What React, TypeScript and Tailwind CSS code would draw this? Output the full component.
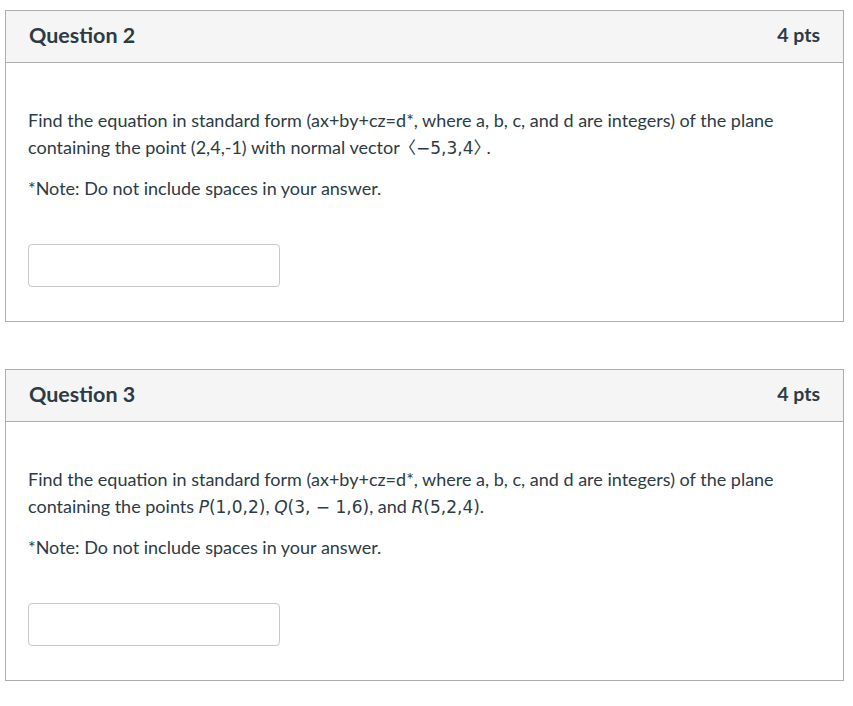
import React from 'react';

const M = ({ children, i }: { children: React.ReactNode; i?: boolean }) => (
  <span className={`font-['DejaVu_Sans','Noto_Sans_CJK_SC',sans-serif] text-[17px] ${i ? 'italic' : ''}`}>{children}</span>
);

function Question({ n, line2 }: { n: number; line2: React.ReactNode }) {
  return (
    <div className="border border-[#adadad] bg-white">
      <div className="flex h-[52px] items-center justify-between border-b border-[#adadad] bg-[#f5f5f5] pb-[3px] pl-[23px] pr-[23px]">
        <h2 className="text-[21.5px] font-bold text-[#2d3b45]">Question {n}</h2>
        <span className="text-[19.5px] font-bold text-[#2d3b45]">4 pts</span>
      </div>
      <div className="px-[22px] pt-[44px] pb-[34px] text-[18px] text-[#2d3b45]">
        <p className="leading-[27px]">
          Find the equation in standard form (ax+by+cz=d*, where a, b, c, and d are integers) of the plane
          <br />
          {line2}
        </p>
        <p className="mt-[13px] leading-[27px]">*Note: Do not include spaces in your answer.</p>
        <div className="mt-[42px] h-[43px] w-[252px] rounded-[4px] border border-[#c8c8c8] bg-white" />
      </div>
    </div>
  );
}

export default function App() {
  return (
    <div className="min-h-[706px] bg-white pl-[5px] pt-[10px] font-['Lato',sans-serif]">
      <div className="flex w-[839px] flex-col gap-[47px]">
        <Question
          n={2}
          line2={
            <>
              containing the point (2,4,-1) with normal vector{' '}
              <M>
                <span className="-ml-[5px]">〈</span>−5,3,4<span className="-mr-[4px]">〉</span>
              </M>
              .
            </>
          }
        />
        <Question
          n={3}
          line2={
            <>
              containing the points <M i>P</M>
              <M>(1,0,2)</M>, <M i>Q</M>
              <M>(3, − 1,6)</M>, and <M i>R</M>
              <M>(5,2,4)</M>.
            </>
          }
        />
      </div>
    </div>
  );
}
